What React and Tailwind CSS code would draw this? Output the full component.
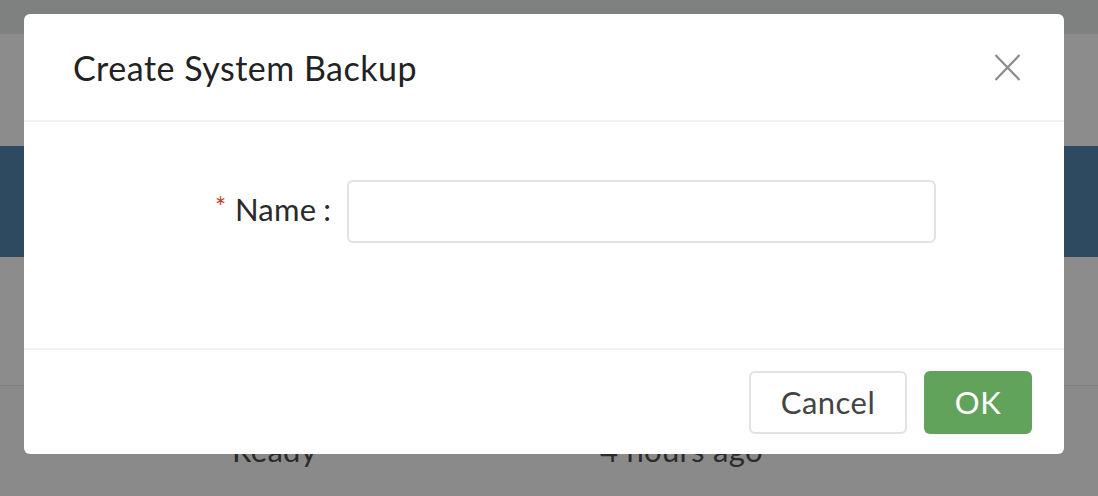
export default function App() {
  return (
    <div className="relative w-[1098px] h-[496px] overflow-hidden bg-[#8a8a8a] font-['Lato','Noto_Sans',sans-serif]">
      {/* page behind the dimmed overlay */}
      <div className="h-[34px] bg-[#7f8080]" />
      <div className="h-[112px] bg-[#8c8c8c]" />
      <div className="h-[111px] bg-[#2e4a60]" />
      <div className="h-[129px] bg-[#8c8c8c] border-b border-[#808080]" />
      <div className="flex pt-[42px] text-[31px] leading-[45px] text-[#2b2b2b] tracking-[0.3px]">
        <span className="ml-[232px] w-[368px]">Ready</span>
        <span>4 hours ago</span>
      </div>

      {/* modal */}
      <div className="absolute left-[24px] top-[14px] w-[1040px] h-[440px] bg-white rounded-[6px] flex flex-col">
        <div className="h-[108px] flex items-center justify-between pl-[49px] pr-[43px] border-b-2 border-[#f2f2f2]">
          <h2 className="text-[34px] text-[#222] font-normal tracking-[0.5px]">Create System Backup</h2>
          <svg width="27" height="27" viewBox="0 0 27 27" className="text-[#8c8c8c]">
            <path d="M1.5 1 L25.5 26 M25.5 1 L1.5 26" stroke="currentColor" strokeWidth="2.2" fill="none" />
          </svg>
        </div>

        <div className="flex-1 pt-[58px]">
          <div className="flex items-center">
            <div className="w-[323px] flex justify-end items-center pr-[16px] -mt-[4px] text-[31px] text-[#2a2a2a]">
              <span className="text-[#c0392b] text-[26px] mr-[9px] -mt-[4px]">*</span>
              <span className="tracking-[0.2px]">Name</span>
              <span className="ml-[7px]">:</span>
            </div>
            <input className="w-[589px] h-[63px] border-2 border-[#e2e2e2] rounded-[6px] px-4 text-[26px] outline-none" />
          </div>
        </div>

        <div className="h-[106px] border-t-2 border-[#f2f2f2] flex items-center justify-end gap-[17px] pr-[32px]">
          <button className="w-[158px] h-[63px] border-2 border-[#e2e2e2] rounded-[6px] text-[31px] tracking-[0.5px] text-[#444] bg-white">Cancel</button>
          <button className="w-[108px] h-[63px] rounded-[6px] text-[31px] tracking-[0.5px] text-white bg-[#62a35c]">OK</button>
        </div>
      </div>
    </div>
  )
}
